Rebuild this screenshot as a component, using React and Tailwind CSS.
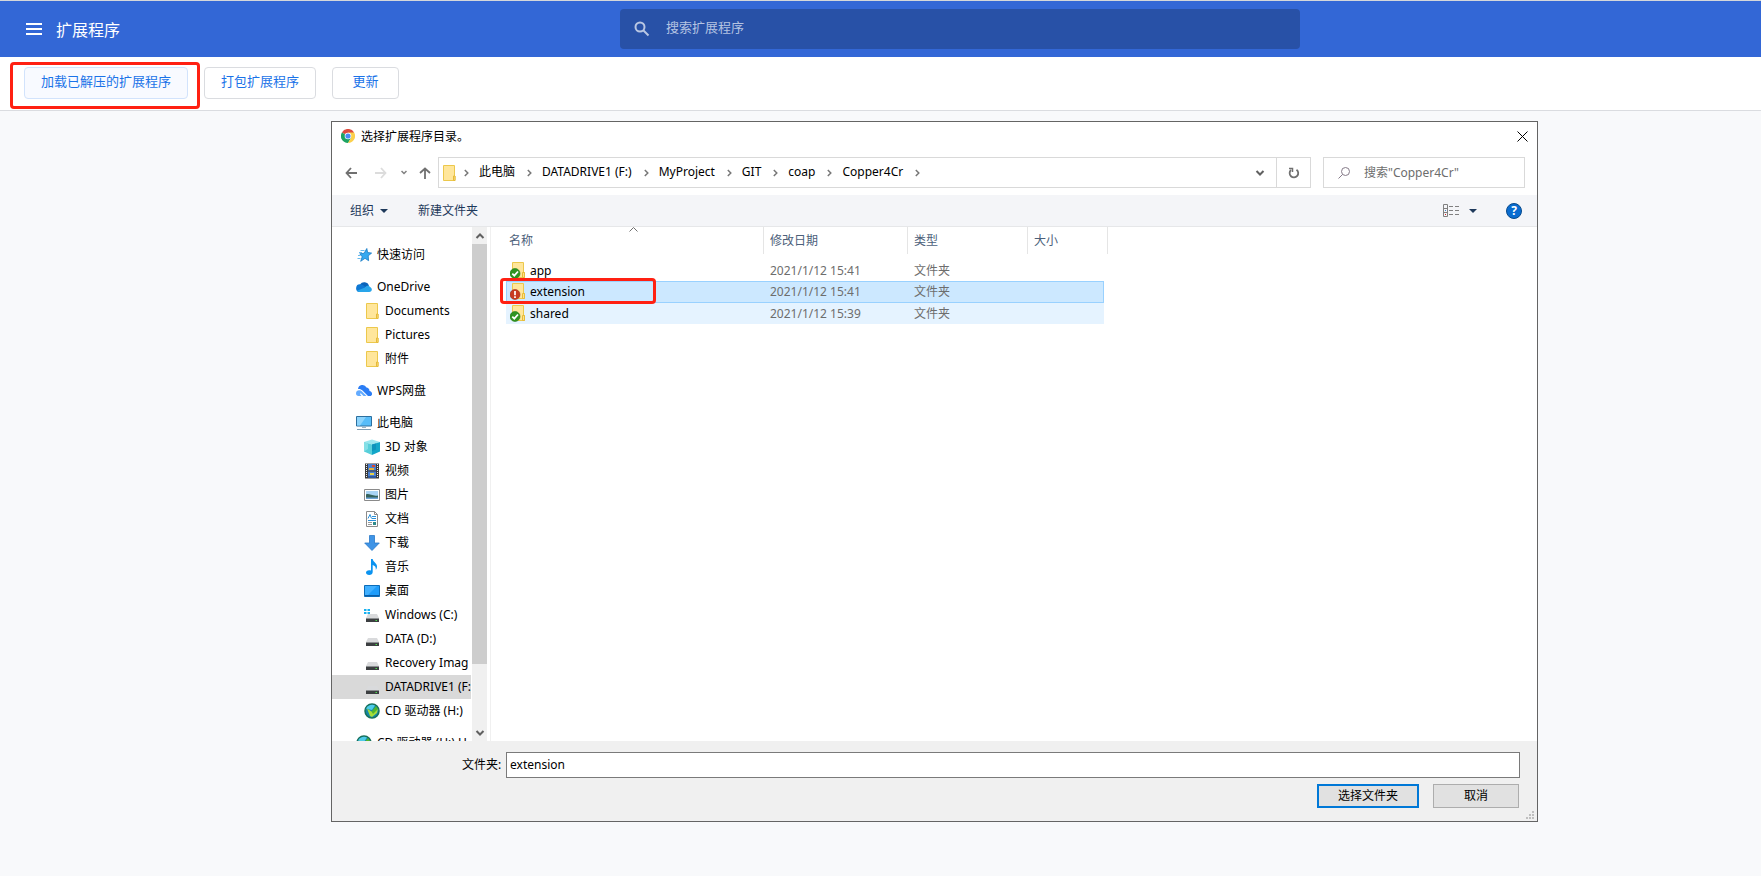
import { Fragment } from 'react';

const Folder = () => (
  <svg width="16" height="16" viewBox="0 0 16 16" aria-hidden="true">
    <path d="M2.500 .5h11v10.500h.5v4.500h-11.500z" fill="#ffe69b" stroke="#ecc84c" />
    <path d="M12.500 15.500v-4.500h1.500v4.500z" fill="#ffe08a" stroke="#e6bb38" />
  </svg>
);

const Star = () => (
  <svg width="16" height="16" viewBox="0 0 16 16" aria-hidden="true">
    <path d="M10.800 1.500l.8 4 4 .6-3.400 2.700.4 4.900-3.600-2.400-4.300 3 1.500-4.500-2.400-3 4.400-.6z" fill="#36a9f0" stroke="#1379c4" strokeWidth=".8" />
    <path d="M4.500 3.500h4M3 5.500h3M2 8.500h2.500M1.500 11.500h3" stroke="#67b9ec" strokeWidth="1" />
  </svg>
);

const OneDrive = () => (
  <svg width="16" height="16" viewBox="0 0 16 16" aria-hidden="true">
    <path d="M4 5.500A5 5 0 0 1 13 6.800l-6 3z" fill="#0a63ba" />
    <path d="M3.500 13A3.700 3.700 0 0 1 4.500 5.300c2 0 3 1 5 3L5 13z" fill="#0f78d4" />
    <path d="M9 8.500c1-2 4-2.500 5-.5 3 1.500 2 5-.800 5H3.500c-1 0-2-.5-2.500-1.200z" fill="#28a5ea" />
  </svg>
);

const WpsCloud = () => (
  <svg width="16" height="16" viewBox="0 0 16 16" aria-hidden="true">
    <path d="M2 6A4.500 4.500 0 0 1 10.500 4.500c3 .5 3 3 3 3.500 2 .5 3 2 2.300 4-.5 1-1.500 1-2.300 1h-1.500L6.500 7.500C5.500 6.500 4 5.800 2 6z" fill="#2b7df5" />
    <path d="M0 10.500C0 7 4 6.500 6 8.500L10.500 13H7.500L5.500 11c-.8-.8-2-.3-1.200.6L5.500 13h-3C1 13 0 12 0 10.500z" fill="#63abff" />
  </svg>
);

const Computer = () => (
  <svg width="16" height="16" viewBox="0 0 16 16" aria-hidden="true">
    <path d="M.5 1.500h15v9.500H.5z" fill="#58bdf9" stroke="#2d6f9e" />
    <path d="M1 2h9L4 10.500H1z" fill="#8dd4fc" />
    <path d="M6 12h4v1H6z" fill="#9fb4c2" />
    <path d="M1 14.500h14" stroke="#7f9db3" />
  </svg>
);

const Cube = () => (
  <svg width="16" height="16" viewBox="0 0 16 16" aria-hidden="true">
    <path d="M0 3L8 .5 16 3 8 5.500z" fill="#9be6ee" />
    <path d="M0 3l8 2.500V16l-8-3.500z" fill="#58cfda" />
    <path d="M16 3L8 5.500V16l8-3.500z" fill="#12a6c8" />
    <path d="M0 3l4 1.500V10l-4 2.500z" fill="#84dfe6" />
    <path d="M8 5.500L12 4.500v6L8 12z" fill="#0d93bb" />
  </svg>
);

const Film = () => (
  <svg width="16" height="16" viewBox="0 0 16 16" aria-hidden="true">
    <path d="M1 .5h14v15H1z" fill="#3b3b3b" />
    <path d="M2.500 1v14M13.500 1v14" stroke="#eee" strokeDasharray="1 1" />
    <path d="M4 1h8v6.500H4zM4 8.500h8V15H4z" fill="#4a7fd0" />
    <path d="M5 5h5v2H5z" fill="#e4b33b" />
    <path d="M8 2h3v2H8z" fill="#d8492f" />
    <path d="M6 10h4v2H6z" fill="#e8d24a" />
    <path d="M4 13h8v2H4z" fill="#2d5aa0" />
  </svg>
);

const Picture = () => (
  <svg width="16" height="16" viewBox="0 0 16 16" aria-hidden="true">
    <path d="M.5 2.500h15v11H.5z" fill="#fff" stroke="#8a8a8a" />
    <path d="M2 4h12v8H2z" fill="#a9d4f5" />
    <path d="M2 7.500c3-1.500 6 2 12 1v3.500H2z" fill="#35635c" />
    <path d="M2 10.500h12V12H2z" fill="#6ea4d6" />
  </svg>
);

const Doc = () => (
  <svg width="16" height="16" viewBox="0 0 16 16" aria-hidden="true">
    <path d="M2.500 .5h8l3 3v12h-11z" fill="#fff" stroke="#8c8c8c" />
    <path d="M10.500 .5v3h3" fill="none" stroke="#8c8c8c" />
    <path d="M4 7.500l2-4 1.500 4M8 5.500h4M8 7.500h4M4 9.500h8" stroke="#2a8fd8" fill="none" />
    <path d="M4 11.500h4M4 13.500h4" stroke="#999" />
    <path d="M9 11h3v3H9z" fill="#2f8a8a" />
  </svg>
);

const Download = () => (
  <svg width="16" height="16" viewBox="0 0 16 16" aria-hidden="true">
    <path d="M5.500 .5h5V8h4.800L8 15.500.7 8h4.800z" fill="#3f94e6" stroke="#2a78c8" strokeWidth=".8" />
  </svg>
);

const Music = () => (
  <svg width="16" height="16" viewBox="0 0 16 16" aria-hidden="true">
    <path d="M7 0h1.700c.3 3 4.300 4 4.300 7.500 0 1.500-.6 2.500-1.200 3.300.4-3-1-4-3.100-4.800V13c0 1.700-1.500 3-3.500 3S2 15 2 13.500s2-3 5-2z" fill="#0b93f0" />
  </svg>
);

const Desktop = () => (
  <svg width="16" height="16" viewBox="0 0 16 16" aria-hidden="true">
    <path d="M.5 2.500h15v11H.5z" fill="#1f9dfb" stroke="#0c6cb8" />
    <path d="M13 3L4 12H1V3z" fill="#41b0ff" />
    <path d="M1 12.500h14" stroke="#0a5da8" />
  </svg>
);

const Drive = ({ system }) => (
  <svg width="16" height="16" viewBox="0 0 16 16" aria-hidden="true">
    <path d="M4 7h9l2 4H2z" fill="#d9dadc" />
    <path d="M2 11h13v4H2z" fill="#3c3f41" />
    <path d="M2 11h13v1H2z" fill="#8b8e90" />
    <path d="M11.500 13h1.500v1h-1.500z" fill="#4ce04c" />
    {system && <path d="M0 2h2.500v2H0zM3.500 2H6v2H3.500zM0 5h2.500v2H0zM3.500 5H6v2H3.500z" fill="#16b1f0" />}
  </svg>
);

const Globe = () => (
  <svg width="16" height="16" viewBox="0 0 16 16" aria-hidden="true">
    <circle cx="8" cy="8" r="7" fill="#1487a8" stroke="#17705a" strokeWidth="1.500" />
    <path d="M2 5.500C4 2 8 1 11 2.500L8 7 5.500 6.500z" fill="#4ecbe8" />
    <path d="M3 5.500l4.500 3L14 6l-1 4-5 4-2-1z" fill="#a5dc3a" />
    <path d="M7.500 8.500L12 3l2 3-5 5z" fill="#4fb52d" />
  </svg>
);

const Chrome = () => (
  <svg width="14" height="14" viewBox="0 0 14 14" aria-hidden="true">
    <path d="M7 7L.9 3.500A7 7 0 0 1 13.100 3.500z" fill="#dd4b3e" />
    <path d="M7 7L.9 3.500A7 7 0 0 0 7 14l3-5z" fill="#1da362" />
    <path d="M7 3.500h6.100A7 7 0 0 1 7 14l3-5z" fill="#fcd04b" />
    <circle cx="7" cy="7" r="3.300" fill="#fff" />
    <circle cx="7" cy="7" r="2.600" fill="#4a8af4" />
  </svg>
);

const Crumb = () => (
  <svg width="5" height="8" viewBox="0 0 5 8" fill="none" stroke="#777" strokeWidth="1.500" aria-hidden="true">
    <path d="M.8 1l3 3-3 3" />
  </svg>
);

const Chevron = ({ up }) => (
  <svg width="10" height="8" viewBox="0 0 10 8" fill="none" stroke="#606060" strokeWidth="2" aria-hidden="true">
    <path d={up ? 'M1.500 6L5 2.500 8.500 6' : 'M1.500 2L5 5.500 8.500 2'} />
  </svg>
);

const Caret = () => (
  <svg width="8" height="4" viewBox="0 0 8 4" aria-hidden="true">
    <path d="M0 0h8L4 4z" fill="#1e395b" />
  </svg>
);

const Arrow = ({ d, color }) => (
  <svg width="12" height="12" viewBox="0 0 12 12" fill="none" stroke={color} strokeWidth="1.800" aria-hidden="true">
    <path d={d} />
  </svg>
);

const StatusFolder = ({ ok }) => (
  <svg width="16" height="18" viewBox="0 0 16 18" aria-hidden="true">
    <path d="M2.500 .5h11v10h1v5h-12z" fill="#ffe69b" stroke="#ecc84c" />
    <path d="M12.500 15.500v-5h2v5z" fill="#ffe08a" stroke="#e6bb38" />
    <circle cx="5" cy="11.500" r="5" fill={ok ? '#2f9420' : '#c83a22'} stroke={ok ? '#1f7a14' : '#9c2a18'} strokeWidth=".6" />
    {ok
      ? <path d="M2.300 11.700l2 2L8 9.500" stroke="#fff" strokeWidth="1.800" fill="none" />
      : <path d="M5 8v4.300M5 13.300v1.700" stroke="#fff" strokeWidth="1.700" />}
  </svg>
);

const groups = [
  [{ icon: <Star />, label: '快速访问' }],
  [
    { icon: <OneDrive />, label: 'OneDrive' },
    { icon: <Folder />, label: 'Documents', child: true },
    { icon: <Folder />, label: 'Pictures', child: true },
    { icon: <Folder />, label: '附件', child: true },
  ],
  [{ icon: <WpsCloud />, label: 'WPS网盘' }],
  [
    { icon: <Computer />, label: '此电脑' },
    { icon: <Cube />, label: '3D 对象', child: true },
    { icon: <Film />, label: '视频', child: true },
    { icon: <Picture />, label: '图片', child: true },
    { icon: <Doc />, label: '文档', child: true },
    { icon: <Download />, label: '下载', child: true },
    { icon: <Music />, label: '音乐', child: true },
    { icon: <Desktop />, label: '桌面', child: true },
    { icon: <Drive system />, label: 'Windows (C:)', child: true },
    { icon: <Drive />, label: 'DATA (D:)', child: true },
    { icon: <Drive />, label: 'Recovery Imag', child: true },
    { icon: <Drive />, label: 'DATADRIVE1 (F:)', child: true, active: true },
    { icon: <Globe />, label: 'CD 驱动器 (H:)', child: true },
  ],
  [{ icon: <Globe />, label: 'CD 驱动器 (H:) H' }],
];

const crumbs = ['此电脑', 'DATADRIVE1 (F:)', 'MyProject', 'GIT', 'coap', 'Copper4Cr'];

const files = [
  { name: 'app', date: '2021/1/12 15:41', ok: true, row: 'h-[21px]' },
  { name: 'extension', date: '2021/1/12 15:41', ok: false, row: 'h-[22px] bg-[#cce8ff] outline outline-1 -outline-offset-1 outline-[#99d1ff]' },
  { name: 'shared', date: '2021/1/12 15:39', ok: true, row: 'h-[21px] bg-[#e5f3ff]' },
];

const Header = () => (
  <header className="flex h-[57px] items-center border-t border-[#d5d7da] bg-[#3367d6] text-white">
    <div className="flex w-[620px] shrink-0 items-center gap-[14px] pl-[26px]">
      <button type="button" aria-label="菜单">
        <svg width="16" height="12" viewBox="0 0 16 12" fill="#fff">
          <path d="M0 0h16v2H0zM0 5h16v2H0zM0 10h16v2H0z" />
        </svg>
      </button>
      <h1 className="text-base leading-6">扩展程序</h1>
    </div>
    <label className="flex h-10 w-[680px] items-center rounded-sm bg-[#2851a7] pl-[14px]">
      <svg width="16" height="16" viewBox="0 0 16 16" fill="none" stroke="#b9c7e3" strokeWidth="2" aria-hidden="true">
        <circle cx="6" cy="6" r="4.500" />
        <path d="M9.500 9.500l5 5" />
      </svg>
      <input
        type="text"
        aria-label="搜索扩展程序"
        placeholder="搜索扩展程序"
        className="ml-4 flex-1 bg-transparent pb-1 text-[13px] leading-5 outline-none placeholder:text-[#b4c3e2]"
      />
    </label>
  </header>
);

const Toolbar = () => (
  <div className="flex h-[54px] items-start gap-4 border-b border-[#dadce0] bg-white pt-[10px] pl-6 text-[13px] text-[#1a73e8]">
    <div className="relative">
      <button type="button" className="h-8 rounded border border-[#d2e3fc] bg-[#f8faff] px-4 pb-1">加载已解压的扩展程序</button>
      <div className="pointer-events-none absolute -top-[5px] -right-3 -bottom-[10px] -left-[14px] rounded border-3 border-[#ff2012]" />
    </div>
    <button type="button" className="h-8 rounded border border-[#dadce0] px-4 pb-1">打包扩展程序</button>
    <button type="button" className="h-8 w-[67px] rounded border border-[#dadce0] pb-1">更新</button>
  </div>
);

const AddressBar = () => (
  <div className="flex h-[31px] items-center pr-3 pl-[13px]">
    <button type="button" aria-label="后退"><Arrow d="M6 1L1.500 6 6 11M1.500 6H12" color="#707070" /></button>
    <button type="button" aria-label="前进" className="ml-[18px]"><Arrow d="M6 1l4.500 5L6 11M10.500 6H0" color="#dcdcdc" /></button>
    <button type="button" aria-label="最近浏览的位置" className="ml-[14px]">
      <svg width="6" height="5" viewBox="0 0 6 5" fill="none" stroke="#808080" strokeWidth="1.500"><path d="M.5 1L3 3.500 5.500 1" /></svg>
    </button>
    <button type="button" aria-label="上移" className="ml-3"><Arrow d="M1 6l5-4.500L11 6M6 1.500V12" color="#707070" /></button>
    <div className="ml-[7px] flex h-full min-w-0 flex-1 items-center border border-[#d9d9d9] pl-[2px]">
      <Folder />
      <nav className="ml-[7px] flex flex-1 items-center">
        <Crumb />
        {crumbs.map((c) => (
          <Fragment key={c}>
            <a href="#" className="mr-3 ml-[10px] whitespace-nowrap pb-px">{c}</a>
            <Crumb />
          </Fragment>
        ))}
      </nav>
      <button type="button" aria-label="展开" className="mr-[11px]"><Chevron /></button>
      <button type="button" aria-label="刷新" className="flex h-full w-[34px] items-center justify-center border-l border-[#d9d9d9]">
        <svg width="12" height="12" viewBox="0 0 12 12" fill="none" stroke="#707070" strokeWidth="1.800">
          <path d="M8.500 2.700A4.300 4.300 0 1 1 3 3" />
          <path d="M1 1.500h3.500V5" strokeWidth="1.500" />
        </svg>
      </button>
    </div>
    <label className="ml-3 flex h-full w-[202px] items-center border border-[#d9d9d9] pl-[14px]">
      <svg width="12" height="12" viewBox="0 0 12 12" fill="none" stroke="#857a88" aria-hidden="true">
        <circle cx="7.500" cy="4.500" r="4" />
        <path d="M4.500 7.500L.5 11.500" />
      </svg>
      <input type="text" aria-label="搜索" placeholder={'搜索"Copper4Cr"'} className="ml-[14px] w-0 flex-1 outline-none placeholder:text-[#6d6d6d]" />
    </label>
  </div>
);

const CommandBar = () => (
  <div className="mt-[7px] flex h-8 shrink-0 items-center border-b border-[#e6e7e9] bg-[#f4f5f8] pr-[15px] pl-[18px] text-[#1e395b]">
    <button type="button" className="flex items-center gap-[6px]">组织 <Caret /></button>
    <button type="button" className="ml-[30px]">新建文件夹</button>
    <button type="button" aria-label="更改视图" className="ml-auto flex items-center gap-[10px]">
      <svg width="16" height="13" viewBox="0 0 16 13" fill="none" stroke="#808080">
        <path d="M.5 .5h4v12h-4zM.5 4.500h4M.5 8.500h4M6 2.500h4M6 6.500h4M6 10.500h4M12 2.500h4M12 6.500h4M12 10.500h4" />
        <path d="M2 6.500h1" stroke="#3c7fd0" />
        <path d="M2 10.500h1" stroke="#d02020" />
      </svg>
      <Caret />
    </button>
    <button type="button" aria-label="帮助" className="ml-[29px] flex size-4 items-center justify-center rounded-full border border-[#074a8c] bg-[#0a6cd0] text-xs font-bold leading-none text-white">
      ?
    </button>
  </div>
);

const Sidebar = () => (
  <div className="flex w-[155px] shrink-0">
    <ul className="flex min-w-0 flex-1 flex-col gap-2 overflow-hidden pt-4">
      {groups.map((items) => (
        <li key={items[0].label}>
          <ul>
            {items.map(({ icon, label, child, active }) => (
              <li key={label} className={`flex h-6 items-center gap-[5px] whitespace-nowrap ${child ? 'pl-8' : 'pl-6'} ${active ? 'bg-[#d9d9d9]' : ''}`}>
                <span className="shrink-0">{icon}</span>
                <span>{label}</span>
              </li>
            ))}
          </ul>
        </li>
      ))}
    </ul>
    <div className="ml-px flex w-[15px] flex-col bg-[#f0f0f0]">
      <button type="button" aria-label="向上滚动" className="flex h-[17px] items-center justify-center"><Chevron up /></button>
      <div className="h-[420px] bg-[#cdcdcd]" />
      <button type="button" aria-label="向下滚动" className="mt-auto flex h-[17px] items-center justify-center"><Chevron /></button>
    </div>
  </div>
);

const FileList = () => (
  <div className="relative ml-[3px] min-w-0 flex-1 border-l border-[#f0f0f0] pl-[15px]">
    <table className="w-[598px] table-fixed border-collapse text-left text-[#6d6d6d]">
      <colgroup>
        <col className="w-[258px]" />
        <col className="w-36" />
        <col className="w-[120px]" />
        <col />
      </colgroup>
      <thead className="text-[#4c607a]">
        <tr>
          <th className="p-0 font-normal">
            <div className="flex h-[27px] items-center border-r border-[#e5e5e5] pl-[3px]">名称</div>
          </th>
          <th className="p-0 font-normal">
            <div className="flex h-[27px] items-center border-r border-[#e5e5e5] pl-[6px]">修改日期</div>
          </th>
          <th className="p-0 font-normal">
            <div className="flex h-[27px] items-center border-r border-[#e5e5e5] pl-[6px]">类型</div>
          </th>
          <th className="p-0 font-normal">
            <div className="flex h-[27px] w-20 items-center border-r border-[#e5e5e5] pl-[6px]">大小</div>
          </th>
        </tr>
        <tr className="h-[6px]" />
      </thead>
      <tbody>
        {files.map((f) => (
          <tr key={f.name} className={f.row}>
            <td className="p-0">
              <div className="flex items-center gap-1 pl-1 text-black">
                <StatusFolder ok={f.ok} />
                {f.name}
              </div>
            </td>
            <td className="p-0 pl-[6px]">{f.date}</td>
            <td className="p-0 pl-[6px]">文件夹</td>
            <td className="p-0" />
          </tr>
        ))}
      </tbody>
    </table>
    {/* sort direction, sits on the top edge of the name column */}
    <svg width="9" height="5" viewBox="0 0 9 5" className="absolute top-0 left-[138px]" fill="none" stroke="#707070" aria-hidden="true">
      <path d="M.5 4.500l4-4 4 4" />
    </svg>
    <div className="pointer-events-none absolute top-[51px] left-[9px] h-[26px] w-[156px] rounded border-3 border-[#ff2012]" />
  </div>
);

const Footer = () => (
  <div className="relative h-20 shrink-0 bg-[#f0f0f0] pt-[11px] pr-[17px] pl-[130px]">
    <div className="flex items-center">
      <label htmlFor="folder" className="w-11 shrink-0">文件夹:</label>
      <input id="folder" type="text" defaultValue="extension" className="h-[26px] flex-1 border border-[#7a7a7a] bg-white px-[3px] pb-[2px] outline-none" />
    </div>
    <div className="mt-[6px] flex justify-end gap-[14px] pr-px">
      <button type="button" className="h-6 w-[102px] border-2 border-[#0078d7] bg-[#e1e1e1]">选择文件夹</button>
      <button type="button" className="h-6 w-[86px] border border-[#adadad] bg-[#e1e1e1]">取消</button>
    </div>
    <svg width="8" height="8" viewBox="0 0 8 8" fill="#bfbfbf" className="absolute right-[3px] bottom-[2px]" aria-hidden="true">
      <path d="M6 0h2v2H6zM3 3h2v2H3zM6 3h2v2H6zM0 6h2v2H0zM3 6h2v2H3zM6 6h2v2H6z" />
    </svg>
  </div>
);

const App = () => (
  <div className="min-h-screen bg-[#f8f9fb] font-['Noto_Sans_CJK_SC',sans-serif]">
    <Header />
    <Toolbar />
    <div
      role="dialog"
      aria-label="选择扩展程序目录。"
      className="mt-[10px] mr-[223px] ml-[331px] flex flex-col border border-[#646464] bg-white font-['Noto_Sans','Noto_Sans_CJK_SC',sans-serif] text-xs leading-4 text-black"
    >
      <div className="flex h-[35px] items-start pt-[7px] pr-[9px] pl-[9px]">
        <Chrome />
        <h2 className="ml-[6px]">选择扩展程序目录。</h2>
        <button type="button" aria-label="关闭" className="mt-[2px] ml-auto">
          <svg width="11" height="11" viewBox="0 0 11 11" fill="none" stroke="#000"><path d="M.5 .5l10 10M10.500 .5l-10 10" /></svg>
        </button>
      </div>
      <AddressBar />
      <CommandBar />
      <div className="flex h-[514px]">
        <Sidebar />
        <FileList />
      </div>
      <Footer />
    </div>
  </div>
);

export default App;
